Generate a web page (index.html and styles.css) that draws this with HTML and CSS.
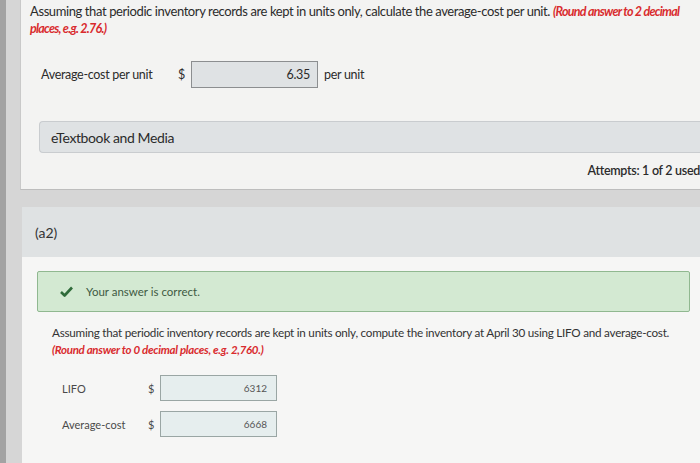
FILE: index.html
```html
<!DOCTYPE html>
<html>
<head>
<meta charset="utf-8">
<link rel="stylesheet" href="styles.css">
</head>
<body>
<div class="page">
  <div class="strip"></div>
  <div class="main">
    <section class="panel top">
      <p class="question"><span>Assuming that periodic inventory records are kept in units only, calculate the average-cost per unit.</span> <em class="red">(Round answer to 2 decimal</em><br><em class="red">places, e.g. 2.76.)</em></p>
      <div class="row avg">
        <span class="label">Average-cost per unit</span>
        <span class="dollar">$</span>
        <span class="input grey">6.35</span>
        <span class="unit">per unit</span>
      </div>
      <div class="media">eTextbook and Media</div>
      <div class="attempts">Attempts: 1 of 2 used</div>
    </section>
    <div class="gap"></div>
    <section class="panel bottom">
      <div class="head">(a2)</div>
      <div class="body">
        <div class="correct">
          <svg class="check" width="13" height="11" viewBox="0 0 13 11"><path d="M1 6 L4.6 9.5 L12 1.5" fill="none" stroke="#2f6b3a" stroke-width="2.6" stroke-linejoin="round"/></svg>
          <span>Your answer is correct.</span>
        </div>
        <p class="q2">Assuming that periodic inventory records are kept in units only, compute the inventory at April 30 using LIFO and average-cost.<br><em class="red r2">(Round answer to 0 decimal places, e.g. 2,760.)</em></p>
        <div class="row small">
          <span class="label2">LIFO</span>
          <span class="dollar2">$</span>
          <span class="input light">6312</span>
        </div>
        <div class="row small">
          <span class="label2">Average-cost</span>
          <span class="dollar2">$</span>
          <span class="input light">6668</span>
        </div>
      </div>
    </section>
  </div>
</div>
</body>
</html>
```
FILE: styles.css
```css
html, body {
  margin: 0;
  padding: 0;
  overflow: hidden;
  background: #f4f4f3;
}
body {
  font-family: Lato, "Open Sans", sans-serif;
  color: #2b2b2b;
  width: 700px;
  height: 463px;
}
.page {
  display: flex;
  height: 463px;
  background: linear-gradient(90deg, #a3a3a3 0 6px, #d6d6d6 6px 20px);
}
.strip { width: 20px; flex: none; }
.main {
  flex: 1;
  display: flex;
  flex-direction: column;
  min-width: 0;
}
.panel { background: #f3f3f2; }
.top {
  border-left: 1px solid #c9c9c9;
  border-bottom: 1px solid #bdbdbd;
  padding: 3px 0 0 9px;
  height: 190px;
  box-sizing: border-box;
  flex: none;
}
.question {
  margin: 0;
  font-size: 13px;
  line-height: 17px;
  letter-spacing: -0.4px;
  padding-right: 4px;
  white-space: nowrap;
}
.red {
  color: #d92b2e;
  font-weight: 700;
  font-style: italic;
}
.question .red {
  font-size: 12.5px;
  letter-spacing: -0.72px;
}
.row { display: flex; align-items: center; }
.avg { margin-top: 24px; padding-left: 11px; font-size: 12.5px; letter-spacing: -0.3px; }
.label { width: 137px; }
.dollar { width: 13px; }
.input {
  box-sizing: border-box;
  display: flex;
  align-items: center;
  justify-content: flex-end;
}
.grey {
  width: 127px;
  height: 27px;
  background: #dfe2e4;
  border: 1px solid #8c8e90;
  padding-right: 7px;
  font-size: 12.5px;
}
.unit { margin-left: 6px; }
.media {
  margin: 33px 0 0 9px;
  height: 32px;
  box-sizing: border-box;
  background: #dfe2e4;
  border: 1px solid #c9cccf;
  border-right: none;
  border-radius: 4px 0 0 4px;
  padding-left: 11px;
  display: flex;
  align-items: center;
  font-size: 14px;
  letter-spacing: -0.4px;
}
.attempts {
  text-align: right;
  font-size: 12.5px;
  letter-spacing: -0.3px;
  margin-top: 10px;
  font-weight: 600;
}
.gap { height: 17px; flex: none; }
.bottom {
  flex: 1;
  margin-left: 2px;
  background: #f6f6f5;
}
.head {
  height: 50px;
  background: #dfe2e3;
  display: flex;
  align-items: center;
  padding-left: 13px;
  font-size: 14px;
  color: #333;
}
.body { padding: 14px 10px 0 15px; }
.correct {
  height: 41px;
  box-sizing: border-box;
  background: #d3e9d2;
  border: 1px solid #90b890;
  border-radius: 2px;
  display: flex;
  align-items: center;
  padding-left: 22px;
  gap: 13px;
  font-size: 11.5px;
  color: #3e5a42;
}
.q2 {
  margin: 12px 0 0 15px;
  font-size: 11.7px;
  line-height: 17px;
  letter-spacing: -0.25px;
  color: #333;
}
.q2 .r2 { font-size: 11.5px; letter-spacing: -0.3px; }
.small { font-size: 11px; color: #4a4a4a; padding-left: 25px; }
.q2 + .small { margin-top: 17px; }
.small + .small { margin-top: 10px; }
.label2 { width: 86px; }
.dollar2 { width: 12px; }
.light {
  width: 117px;
  height: 26px;
  background: #e6eeee;
  border: 1px solid #9aa6a4;
  padding-right: 9px;
  font-size: 10px;
  color: #555;
}
```
